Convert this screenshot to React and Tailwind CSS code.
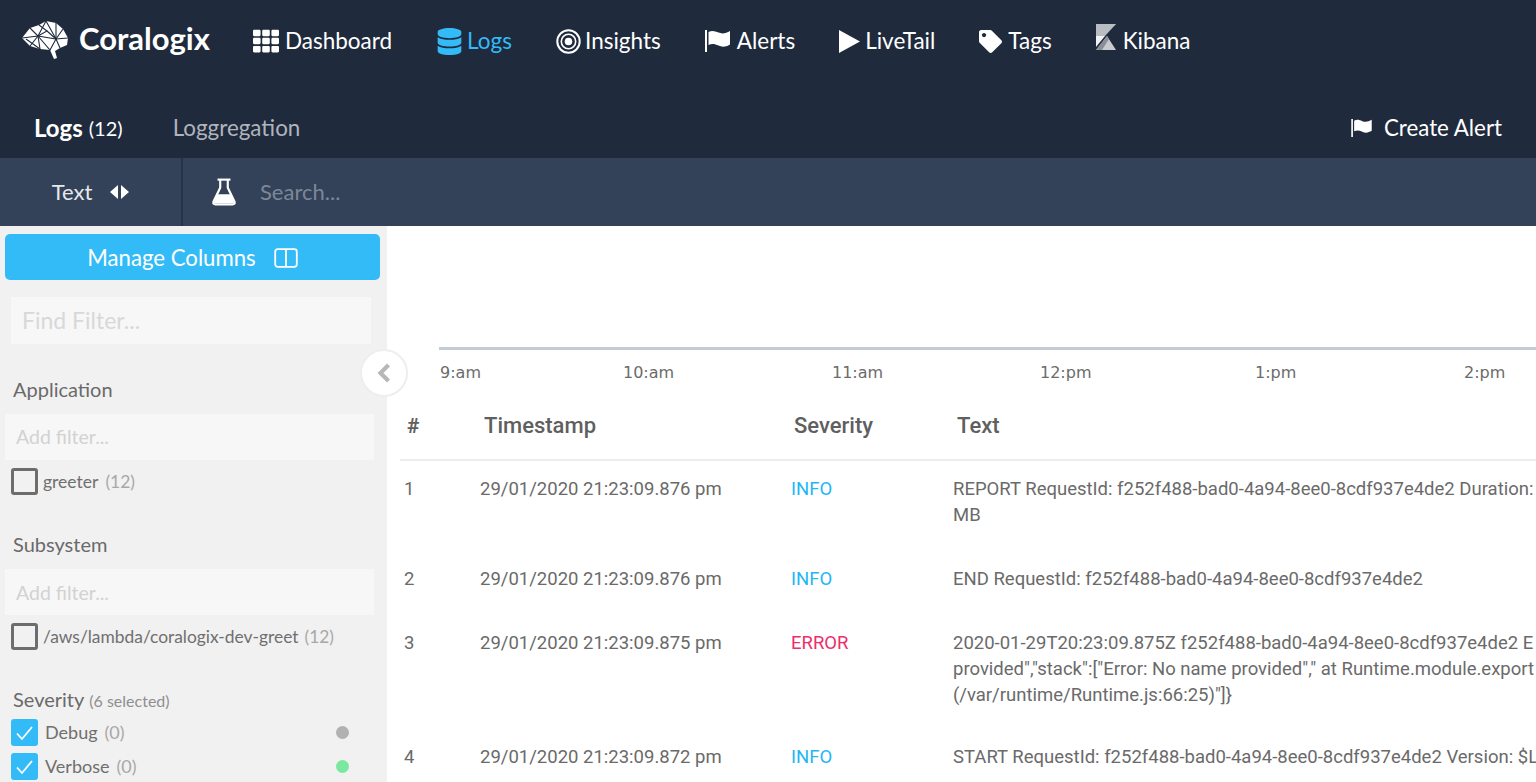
import React from "react";
import { FaTh, FaDatabase, FaTag } from "react-icons/fa";

function BrainLogo() {
  return (
    <svg width="46" height="40" viewBox="0 0 46 40" className="mb-[2px] shrink-0">
      <path d="M0 18 L8 8 L17 5 L24 1 L34 3 L41 9 L46 18 L45 25 L38 28 L33 31 L35 38 L32 39 L28 30 L18 29 L8 26 Z" fill="#ffffff" />
      <g stroke="#1f2a3d" strokeWidth="1.1" fill="none">
        <path d="M0 18 L16 16 L24 1" />
        <path d="M8 8 L16 16 L18 29" />
        <path d="M17 5 L25 11 L16 16 L34 19 L24 1" />
        <path d="M25 11 L34 19 L34 3" />
        <path d="M8 26 L16 16 L28 30 L34 19 L46 18" />
        <path d="M34 19 L38 28 M34 19 L41 9" />
        <path d="M4 19 L18 29" />
      </g>
    </svg>
  );
}

function InsightsIcon() {
  return (
    <svg width="25" height="25" viewBox="0 0 25 25" fill="none" className="shrink-0">
      <circle cx="12.5" cy="12.5" r="11.2" stroke="#fff" strokeWidth="2" />
      <circle cx="12.5" cy="12.5" r="7.2" stroke="#fff" strokeWidth="1.6" />
      <circle cx="12.5" cy="12.5" r="3.8" fill="#fff" />
    </svg>
  );
}

function KibanaIcon() {
  return (
    <svg width="20" height="26" viewBox="0 0 20 26" className="mb-[9px] shrink-0">
      <path d="M0 0 H20 L0 14 Z" fill="#b9bcc1" />
      <path d="M0 0 H20 L9 12 H0 Z" fill="#b9bcc1" />
      <path d="M0 12 H9 L0 23 Z" fill="#f2f2f2" />
      <path d="M0 26 L11 12 L20 26 Z" fill="#c9cbcf" />
      <path d="M0 26 L11 12 L13 15 L6 26 Z" fill="#8b9098" />
    </svg>
  );
}

function FlagIcon({ className }) {
  return (
    <svg viewBox="0 0 25 22" fill="#fff" className={className}>
      <rect x="0" y="0" width="2" height="22" />
      <path d="M3.5 2 C7 0 10 1 13.5 2.6 C17 4 21 3.6 25 1 V14.5 C21 17 17 17.4 13.5 15.6 C10 14 7 13.4 3.5 15 Z" />
    </svg>
  );
}

function NavItem({ icon, label, active, gap = "gap-[6px]" }) {
  return (
    <div className={`flex items-center ${gap} text-[22.5px] leading-7 ${active ? "text-[#33bbf7]" : "text-white"}`}>
      {icon}
      <span>{label}</span>
    </div>
  );
}

function Check({ on }) {
  if (on) {
    return (
      <span className="flex h-[27px] w-[27px] shrink-0 items-center justify-center rounded-[3px] bg-[#33bbf7]">
        <svg width="19" height="16" viewBox="0 0 19 16" fill="none">
          <path d="M2 8.5 L7 14 L17 2" stroke="#fff" strokeWidth="1.8" />
        </svg>
      </span>
    );
  }
  return <span className="h-[27px] w-[27px] shrink-0 rounded-[3px] border-[3px] border-[#6d6d6d]" />;
}

function FilterInput() {
  return (
    <div className="ml-[5px] flex h-[46px] w-[369px] items-center bg-[#f7f7f7] pl-[11px] text-[19.5px] text-[#d2d2d2]">
      Add filter...
    </div>
  );
}

function SeverityRow({ label, dot, className }) {
  return (
    <div className={`flex items-center pl-[11px] ${className}`}>
      <Check on />
      <span className="ml-[7px] text-[18px] text-[#6f6f6f]">{label}</span>
      <span className="ml-[7px] text-[18px] text-[#a8a8a8]">(0)</span>
      <span className={`absolute left-[336px] h-[13px] w-[13px] rounded-full ${dot}`} />
    </div>
  );
}

function Sidebar() {
  return (
    <aside className="relative w-[387px] shrink-0 bg-[#f1f1f1] pt-2">
      <div className="mx-[5px] flex h-[46px] w-[375px] items-center justify-center gap-[18px] rounded-[5px] bg-[#33bbf7] pt-[1px] text-[22.2px] text-white">
        <span>Manage Columns</span>
        <svg width="24" height="20" viewBox="0 0 24 20" fill="none">
          <rect x="1.2" y="1.2" width="21.6" height="17.6" rx="2.5" stroke="#fff" strokeWidth="1.8" />
          <path d="M12 1.5 V18.5" stroke="#fff" strokeWidth="1.8" />
        </svg>
      </div>
      <div className="ml-[11px] mt-[17px] flex h-[47px] w-[360px] items-center bg-[#f7f7f7] pl-[11px] text-[23px] text-[#d8d8d8]">
        Find Filter...
      </div>
      <div className="ml-[13px] mt-[32px] h-[26px] text-[20px] leading-[26px] text-[#6a6a6a]">Application</div>
      <div className="mt-[12px]"><FilterInput /></div>
      <div className="mt-[8px] flex items-center pl-[11px]">
        <Check />
        <span className="ml-[5px] pt-[1px] text-[17.5px] text-[#6f6f6f]">greeter</span>
        <span className="ml-[7px] pt-[1px] text-[17.5px] text-[#a8a8a8]">(12)</span>
      </div>
      <div className="ml-[13px] mt-[36px] h-[26px] text-[20px] leading-[26px] text-[#6a6a6a]">Subsystem</div>
      <div className="mt-[12px]"><FilterInput /></div>
      <div className="mt-[8px] flex items-center pl-[11px]">
        <Check />
        <span className="ml-[5px] pt-[1px] text-[17.4px] text-[#6f6f6f]">/aws/lambda/coralogix-dev-greet</span>
        <span className="ml-[6px] pt-[1px] text-[17.4px] text-[#a8a8a8]">(12)</span>
      </div>
      <div className="ml-[13px] mt-[36px] flex h-[26px] items-baseline gap-[5px] leading-[26px]">
        <span className="text-[20px] text-[#6a6a6a]">Severity</span>
        <span className="text-[16px] text-[#8f8f8f]">(6 selected)</span>
      </div>
      <SeverityRow label="Debug" dot="bg-[#b1b1b1]" className="mt-[7px]" />
      <SeverityRow label="Verbose" dot="bg-[#7be8a0]" className="mt-[7px]" />
      <button className="absolute left-[360px] top-[123px] z-10 flex h-[48px] w-[48px] items-center justify-center rounded-full border-2 border-[#eeeeee] bg-white">
        <svg width="14" height="20" viewBox="0 0 14 20" fill="none">
          <path d="M11.5 2 L3.5 10 L11.5 18" stroke="#b7b7b7" strokeWidth="4.2" />
        </svg>
      </button>
    </aside>
  );
}

const ROWS = [
  { n: 1, ms: "876", sev: "INFO", color: "text-[#1fb6f5]", pb: "pb-[38px]", lines: ["REPORT RequestId: f252f488-bad0-4a94-8ee0-8cdf937e4de2 Duration:", "MB"] },
  { n: 2, ms: "876", sev: "INFO", color: "text-[#1fb6f5]", pb: "pb-[38px]", lines: ["END RequestId: f252f488-bad0-4a94-8ee0-8cdf937e4de2"] },
  { n: 3, ms: "875", sev: "ERROR", color: "text-[#ec2f6c]", pb: "pb-[36px]", lines: ["2020-01-29T20:23:09.875Z f252f488-bad0-4a94-8ee0-8cdf937e4de2 E", "provided\",\"stack\":[\"Error: No name provided\",\" at Runtime.module.export", "(/var/runtime/Runtime.js:66:25)\"]}"] },
  { n: 4, ms: "872", sev: "INFO", color: "text-[#1fb6f5]", pb: "pb-0", lines: ["START RequestId: f252f488-bad0-4a94-8ee0-8cdf937e4de2 Version: $L"] },
];

function Main() {
  return (
    <main className="min-w-0 flex-1 overflow-hidden bg-white font-['Roboto',sans-serif]">
      <div className="ml-[52px] mt-[121px] h-[3px] bg-[#c3cbd6]" />
      <div className="ml-[53px] mt-[13px] grid h-[20px] grid-cols-[183px_209px_208px_215px_209px_1fr] whitespace-nowrap font-['DejaVu_Sans',sans-serif] text-[16px] leading-[20px] text-[#6b6b6b]">
        <span>9:am</span>
        <span>10:am</span>
        <span>11:am</span>
        <span>12:pm</span>
        <span>1:pm</span>
        <span>2:pm</span>
      </div>
      <div className="ml-[13px] mt-[29px] grid h-[49px] grid-cols-[77px_310px_163px_1fr] border-b-2 border-[#ececec] pl-[7px] text-[22px] font-medium leading-[28px] text-[#5f5f5f]">
        <span className="text-[21px] font-bold">#</span>
        <span>Timestamp</span>
        <span>Severity</span>
        <span>Text</span>
      </div>
      <div className="ml-[17px] pt-[15px]">
        {ROWS.map((r) => (
          <div key={r.n} className={`grid grid-cols-[76px_311px_162px_1fr] text-[18.5px] leading-[26px] text-[#6a6a6a] ${r.pb}`}>
            <span>{r.n}</span>
            <span className="whitespace-nowrap">29/01/2020 21:23:09.{r.ms} pm</span>
            <span className={r.color}>{r.sev}</span>
            <div className="min-w-0">
              {r.lines.map((l, i) => (
                <div key={i} className="whitespace-nowrap">{l}</div>
              ))}
            </div>
          </div>
        ))}
      </div>
    </main>
  );
}

export default function App() {
  return (
    <div className="flex h-[782px] w-full flex-col overflow-hidden bg-white font-['Lato',sans-serif]">
      <header className="h-[158px] shrink-0 bg-[#1f2a3d]">
        <div className="flex h-[82px] items-center pl-[22px]">
          <BrainLogo />
          <span className="mb-[6px] ml-[11px] text-[31px] font-bold leading-8 text-white">Coralogix</span>
          <div className="ml-[43px] flex items-center gap-[44px]">
            <NavItem icon={<FaTh size={26} />} label="Dashboard" gap="gap-[6px]" />
            <NavItem icon={<FaDatabase size={27} />} label="Logs" gap="gap-[4px]" active />
            <NavItem icon={<InsightsIcon />} label="Insights" gap="gap-[4px]" />
            <NavItem icon={<FlagIcon className="h-[22px] w-[25px] shrink-0" />} label="Alerts" gap="gap-[7px]" />
            <NavItem
              icon={
                <svg width="21" height="23" viewBox="0 0 21 23" fill="#fff" className="shrink-0">
                  <path d="M0 0 L21 11.5 L0 23 Z" />
                </svg>
              }
              label="LiveTail"
              gap="gap-[5px]"
            />
            <NavItem icon={<FaTag size={23} />} label="Tags" />
            <NavItem icon={<KibanaIcon />} label="Kibana" gap="gap-[7px]" />
          </div>
        </div>
        <div className="mt-[17px] flex h-[58px] items-center px-[34px]">
          <span className="text-[24px] font-bold text-white">Logs</span>
          <span className="ml-[6px] text-[20px] text-white">(12)</span>
          <span className="ml-[50px] text-[22.4px] text-[#b0b4bc]">Loggregation</span>
          <div className="ml-auto flex items-center gap-[12px] text-[22.3px] text-white">
            <FlagIcon className="h-[18px] w-[21px]" />
            <span>Create Alert</span>
          </div>
        </div>
      </header>
      <div className="flex h-[68px] shrink-0 items-center bg-[#344259]">
        <div className="flex h-full w-[183px] items-center justify-center gap-[18px] border-r-2 border-[#263247] pb-[1px] text-[22px] text-[#e6e8eb]">
          <span>Text</span>
          <svg width="19" height="14" viewBox="0 0 19 14" fill="#fff">
            <path d="M8 0 V14 L0 7 Z M11 0 V14 L19 7 Z" />
          </svg>
        </div>
        <svg width="26" height="28" viewBox="0 0 24 26" fill="none" className="ml-[28px]">
          <path d="M6 1.5 H18" stroke="#fff" strokeWidth="2" />
          <path d="M8.5 1.5 V9 L2.2 22 Q1.5 24.5 4 24.5 H20 Q22.5 24.5 21.8 22 L15.5 9 V1.5" stroke="#fff" strokeWidth="2" />
          <path d="M5.5 15 H18.5 L21.5 23.5 H2.5 Z" fill="#fff" />
        </svg>
        <span className="ml-[23px] pb-[2px] text-[22px] text-[#7c8798]">Search...</span>
      </div>
      <div className="flex min-h-0 flex-1">
        <Sidebar />
        <Main />
      </div>
    </div>
  );
}
